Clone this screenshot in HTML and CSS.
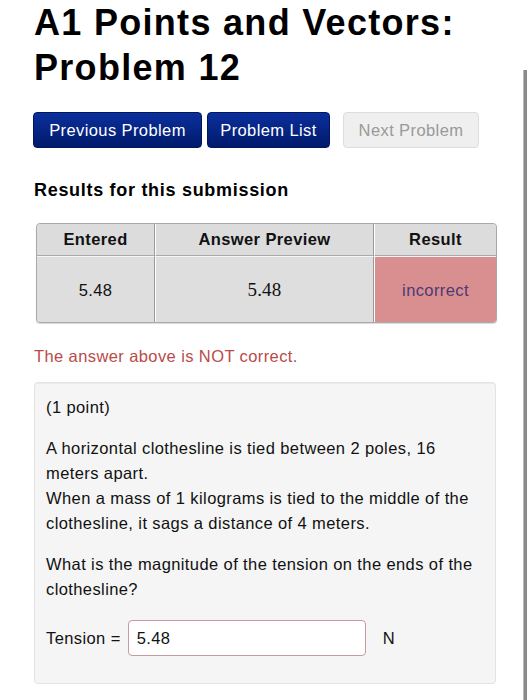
FILE: index.html
```html
<!DOCTYPE html>
<html>
<head>
<meta charset="utf-8">
<link rel="stylesheet" href="styles.css">
</head>
<body>
<div class="scrollbar"></div>
<div class="page">
  <h1 class="title">A1 Points and Vectors:<br>Problem 12</h1>
  <div class="nav">
    <a class="btn btn-primary">Previous Problem</a>
    <a class="btn btn-primary">Problem List</a>
    <a class="btn btn-disabled">Next Problem</a>
  </div>
  <h2 class="results-title">Results for this submission</h2>
  <div class="results">
    <div class="row head">
      <div class="cell c1">Entered</div>
      <div class="cell c2">Answer Preview</div>
      <div class="cell c3">Result</div>
    </div>
    <div class="row body">
      <div class="cell c1">5.48</div>
      <div class="cell c2 math">5.48</div>
      <div class="cell c3 bad">incorrect</div>
    </div>
  </div>
  <p class="warning">The answer above is NOT correct.</p>
  <div class="problem">
    <p class="para">(1 point)</p>
    <p class="para">A horizontal clothesline is tied between 2 poles, 16 meters apart.<br>When a mass of 1 kilograms is tied to the middle of the clothesline, it sags a distance of 4 meters.</p>
    <p class="para">What is the magnitude of the tension on the ends of the clothesline?</p>
    <div class="answer">
      <span class="label">Tension =</span>
      <span class="input">5.48</span>
      <span class="unit">N</span>
    </div>
  </div>
</div>
</body>
</html>
```
FILE: styles.css
```css
html, body {
  margin: 0;
  padding: 0;
  background: #fff;
}
body {
  font-family: "Liberation Sans", Arial, sans-serif;
  color: #111;
  width: 532px;
  height: 700px;
  overflow: hidden;
  position: relative;
  letter-spacing: 0.4px;
}
.scrollbar {
  position: absolute;
  left: 523px;
  top: 70px;
  width: 3px;
  height: 640px;
  background: #8a8a8a;
  border-left: 1px solid #bbb;
}
.page {
  padding: 0 0 0 34px;
  width: 462px;
}
.title {
  margin: 0;
  padding-top: 0;
  font-size: 36px;
  line-height: 45px;
  font-weight: bold;
  color: #000;
  letter-spacing: 1.3px;
}
.nav {
  display: flex;
  margin-top: 22px;
  gap: 5px;
}
.btn {
  display: block;
  height: 36px;
  box-sizing: border-box;
  border-radius: 4px;
  font-size: 16.5px;
  text-align: center;
}
.btn-primary {
  background: linear-gradient(#0b2f9c, #001a6c);
  color: #fff;
  border: 1px solid #00175e;
  line-height: 34px;
}
.nav .btn:nth-child(1) { width: 169px; margin-left: -1px; }
.nav .btn:nth-child(2) { width: 123px; }
.nav .btn:nth-child(3) {
  width: 136px;
  margin-left: 8px;
}
.btn-disabled {
  background: #efefef;
  border: 1px solid #ddd;
  color: #999;
  line-height: 34px;
}
.results-title {
  margin: 31px 0 0 0;
  font-size: 18px;
  line-height: 22px;
  font-weight: bold;
  color: #000;
  letter-spacing: 0.7px;
}
.results {
  margin: 22px 0 0 2px;
  width: 459px;
  border: 1px solid #a9a9a9;
  border-radius: 4px;
  overflow: hidden;
  box-shadow: 0 1px 1px rgba(0,0,0,0.15);
  background: #ddd;
}
.row {
  display: flex;
}
.cell {
  text-align: center;
  box-sizing: border-box;
  border-left: 1px solid #fff;
  border-right: 1px solid #999;
}
.cell.c1 { width: 118px; border-left: none; }
.cell.c2 { width: 219px; }
.cell.c3 { flex: 1; border-right: none; }
.head .cell {
  height: 32px;
  line-height: 31px;
  font-weight: bold;
  font-size: 16.5px;
  color: #111;
  background: #dcdcdc;
  border-bottom: 1px solid #aaa;
}
.body .cell {
  height: 66px;
  line-height: 66px;
  font-size: 16.5px;
  background: #dedede;
  border-top: 1px solid #f5f5f5;
}
.body .math {
  font-family: "Liberation Serif", "Times New Roman", serif;
  font-size: 19px;
  letter-spacing: 0.2px;
}
.body .bad {
  background: #d98f8f;
  color: #4b3a78;
}
.warning {
  margin: 22px 0 0 0;
  font-size: 16.5px;
  line-height: 22px;
  color: #b94a48;
}
.problem {
  margin-top: 15px;
  width: 462px;
  box-sizing: border-box;
  background: #f5f5f5;
  border: 1px solid #e3e3e3;
  border-radius: 4px;
  padding: 12px 11px 27px 11px;
  box-shadow: inset 0 1px 1px rgba(0,0,0,0.04);
}
.para {
  margin: 0 0 16px 0;
  font-size: 16.5px;
  line-height: 25px;
  color: #111;
}
.answer {
  display: flex;
  align-items: center;
  margin-top: 18px;
}
.label {
  font-size: 16.5px;
}
.input {
  display: block;
  margin-left: 7px;
  width: 238px;
  height: 36px;
  box-sizing: border-box;
  background: #fff;
  border: 1px solid #c99a9e;
  border-radius: 4px;
  padding-left: 8px;
  font-size: 16.5px;
  line-height: 34px;
}
.unit {
  margin-left: 17px;
  font-size: 16.5px;
}
```
